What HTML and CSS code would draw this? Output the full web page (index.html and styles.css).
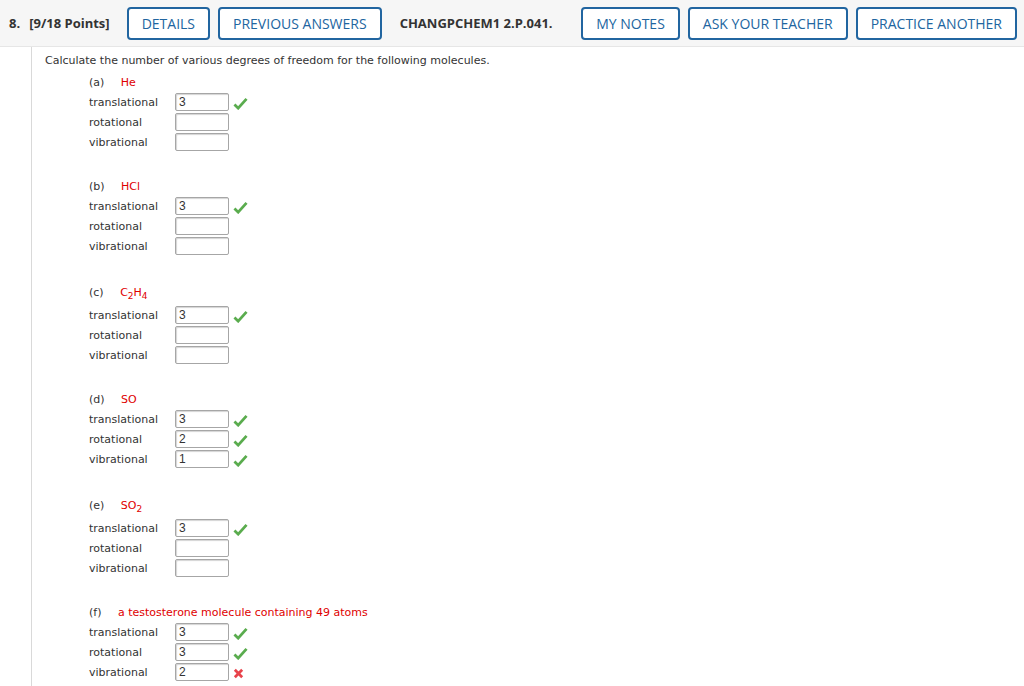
FILE: index.html
```html
<!DOCTYPE html>
<html lang="en">
<head>
    <meta charset="UTF-8">
    <title>Question 8</title>
    <link rel="stylesheet" href="styles.css">
</head>
<body>
    <div class="question-header">
        <span class="q-num">8.</span>
        <span class="q-points">[9/18 Points]</span>
        <button class="hdr-btn btn-first">DETAILS</button>
        <button class="hdr-btn">PREVIOUS ANSWERS</button>
        <span class="q-code">CHANGPCHEM1 2.P.041.</span>
        <div class="hdr-right">
            <button class="hdr-btn">MY NOTES</button>
            <button class="hdr-btn">ASK YOUR TEACHER</button>
            <button class="hdr-btn">PRACTICE ANOTHER</button>
        </div>
    </div>

    <div class="question-body">
        <p class="intro">Calculate the number of various degrees of freedom for the following molecules.</p>

        <!-- (a) -->
        <div class="part">
            <div class="part-title">(a) <span class="mol">He</span></div>
            <div class="row"><span class="lbl">translational</span><input class="ans" type="text" value="3"><svg class="mark" viewBox="0 0 16 14"><path d="M1.5 8 L5.5 12 L14.5 2" fill="none" stroke="#5aac4e" stroke-width="3"/></svg></div>
            <div class="row"><span class="lbl">rotational</span><input class="ans" type="text" value=""></div>
            <div class="row"><span class="lbl">vibrational</span><input class="ans" type="text" value=""></div>
        </div>

        <!-- (b) -->
        <div class="part">
            <div class="part-title">(b) <span class="mol">HCl</span></div>
            <div class="row"><span class="lbl">translational</span><input class="ans" type="text" value="3"><svg class="mark" viewBox="0 0 16 14"><path d="M1.5 8 L5.5 12 L14.5 2" fill="none" stroke="#5aac4e" stroke-width="3"/></svg></div>
            <div class="row"><span class="lbl">rotational</span><input class="ans" type="text" value=""></div>
            <div class="row"><span class="lbl">vibrational</span><input class="ans" type="text" value=""></div>
        </div>

        <!-- (c) -->
        <div class="part">
            <div class="part-title has-sub">(c) <span class="mol">C<sub>2</sub>H<sub>4</sub></span></div>
            <div class="row"><span class="lbl">translational</span><input class="ans" type="text" value="3"><svg class="mark" viewBox="0 0 16 14"><path d="M1.5 8 L5.5 12 L14.5 2" fill="none" stroke="#5aac4e" stroke-width="3"/></svg></div>
            <div class="row"><span class="lbl">rotational</span><input class="ans" type="text" value=""></div>
            <div class="row"><span class="lbl">vibrational</span><input class="ans" type="text" value=""></div>
        </div>

        <!-- (d) -->
        <div class="part">
            <div class="part-title">(d) <span class="mol">SO</span></div>
            <div class="row"><span class="lbl">translational</span><input class="ans" type="text" value="3"><svg class="mark" viewBox="0 0 16 14"><path d="M1.5 8 L5.5 12 L14.5 2" fill="none" stroke="#5aac4e" stroke-width="3"/></svg></div>
            <div class="row"><span class="lbl">rotational</span><input class="ans" type="text" value="2"><svg class="mark" viewBox="0 0 16 14"><path d="M1.5 8 L5.5 12 L14.5 2" fill="none" stroke="#5aac4e" stroke-width="3"/></svg></div>
            <div class="row"><span class="lbl">vibrational</span><input class="ans" type="text" value="1"><svg class="mark" viewBox="0 0 16 14"><path d="M1.5 8 L5.5 12 L14.5 2" fill="none" stroke="#5aac4e" stroke-width="3"/></svg></div>
        </div>

        <!-- (e) -->
        <div class="part">
            <div class="part-title has-sub">(e) <span class="mol">SO<sub>2</sub></span></div>
            <div class="row"><span class="lbl">translational</span><input class="ans" type="text" value="3"><svg class="mark" viewBox="0 0 16 14"><path d="M1.5 8 L5.5 12 L14.5 2" fill="none" stroke="#5aac4e" stroke-width="3"/></svg></div>
            <div class="row"><span class="lbl">rotational</span><input class="ans" type="text" value=""></div>
            <div class="row"><span class="lbl">vibrational</span><input class="ans" type="text" value=""></div>
        </div>

        <!-- (f) -->
        <div class="part">
            <div class="part-title">(f) <span class="mol">a testosterone molecule containing 49 atoms</span></div>
            <div class="row"><span class="lbl">translational</span><input class="ans" type="text" value="3"><svg class="mark" viewBox="0 0 16 14"><path d="M1.5 8 L5.5 12 L14.5 2" fill="none" stroke="#5aac4e" stroke-width="3"/></svg></div>
            <div class="row"><span class="lbl">rotational</span><input class="ans" type="text" value="3"><svg class="mark" viewBox="0 0 16 14"><path d="M1.5 8 L5.5 12 L14.5 2" fill="none" stroke="#5aac4e" stroke-width="3"/></svg></div>
            <div class="row"><span class="lbl">vibrational</span><input class="ans" type="text" value="2"><svg class="mark mark-x" viewBox="0 0 12 12"><path d="M2 2 L10 10 M10 2 L2 10" fill="none" stroke="#e8434b" stroke-width="3"/></svg></div>
        </div>
    </div>
</body>
</html>
```

FILE: styles.css
```css
body {
    margin: 0;
    padding: 0;
    background-color: #ffffff;
    font-family: "DejaVu Sans", Verdana, sans-serif;
    font-size: 11px;
    color: #333333;
    overflow: hidden;
}

.question-header {
    display: flex;
    align-items: center;
    height: 46px;
    padding: 0 7px 0 9px;
    background-color: #f6f6f6;
    border-bottom: 1px solid #e6e6e6;
    font-family: "Open Sans", sans-serif;
}

.q-num,
.q-points,
.q-code {
    font-weight: bold;
    font-size: 13px;
    color: #333333;
}

.q-points {
    margin-left: 9px;
}

.q-code {
    margin-left: 18px;
}

.hdr-btn {
    height: 33px;
    padding: 0 13px;
    margin-left: 8px;
    background-color: #ffffff;
    border: 2px solid #2165a0;
    border-radius: 4px;
    color: #2165a0;
    font-family: "Open Sans", sans-serif;
    font-size: 14px;
    cursor: pointer;
}

.btn-first {
    margin-left: 17px;
}

.hdr-right {
    margin-left: auto;
    display: flex;
}

.question-body {
    margin-left: 31px;
    border-left: 1px solid #d9d9d9;
    padding: 4px 0 40px 13px;
    min-height: 640px;
}

.intro {
    margin: 0 0 2px 0;
    line-height: 20px;
}

.part {
    margin-left: 44px;
    margin-bottom: 25px;
}

.part-title {
    line-height: 19px;
    height: 19px;
}

.part-title.has-sub {
    padding: 2px 0 3px 0;
}

.mol {
    color: #e00000;
    margin-left: 13px;
}

.mol sub {
    font-size: 9px;
    line-height: 0;
}

.row {
    display: flex;
    align-items: center;
    height: 20px;
}

.lbl {
    width: 86px;
}

.ans {
    width: 54px;
    height: 18px;
    box-sizing: border-box;
    margin: 0;
    padding: 0 3px;
    border: 1px solid #a6a6a6;
    border-radius: 2px;
    box-shadow: inset 1px 1px 1px #d4d4d4;
    font-family: "Liberation Sans", Arial, sans-serif;
    font-size: 12px;
    color: #333333;
}

.mark {
    width: 15px;
    height: 13px;
    margin-left: 4px;
    margin-top: 3px;
}

.mark-x {
    width: 11px;
    height: 11px;
    margin-left: 4px;
}
```
